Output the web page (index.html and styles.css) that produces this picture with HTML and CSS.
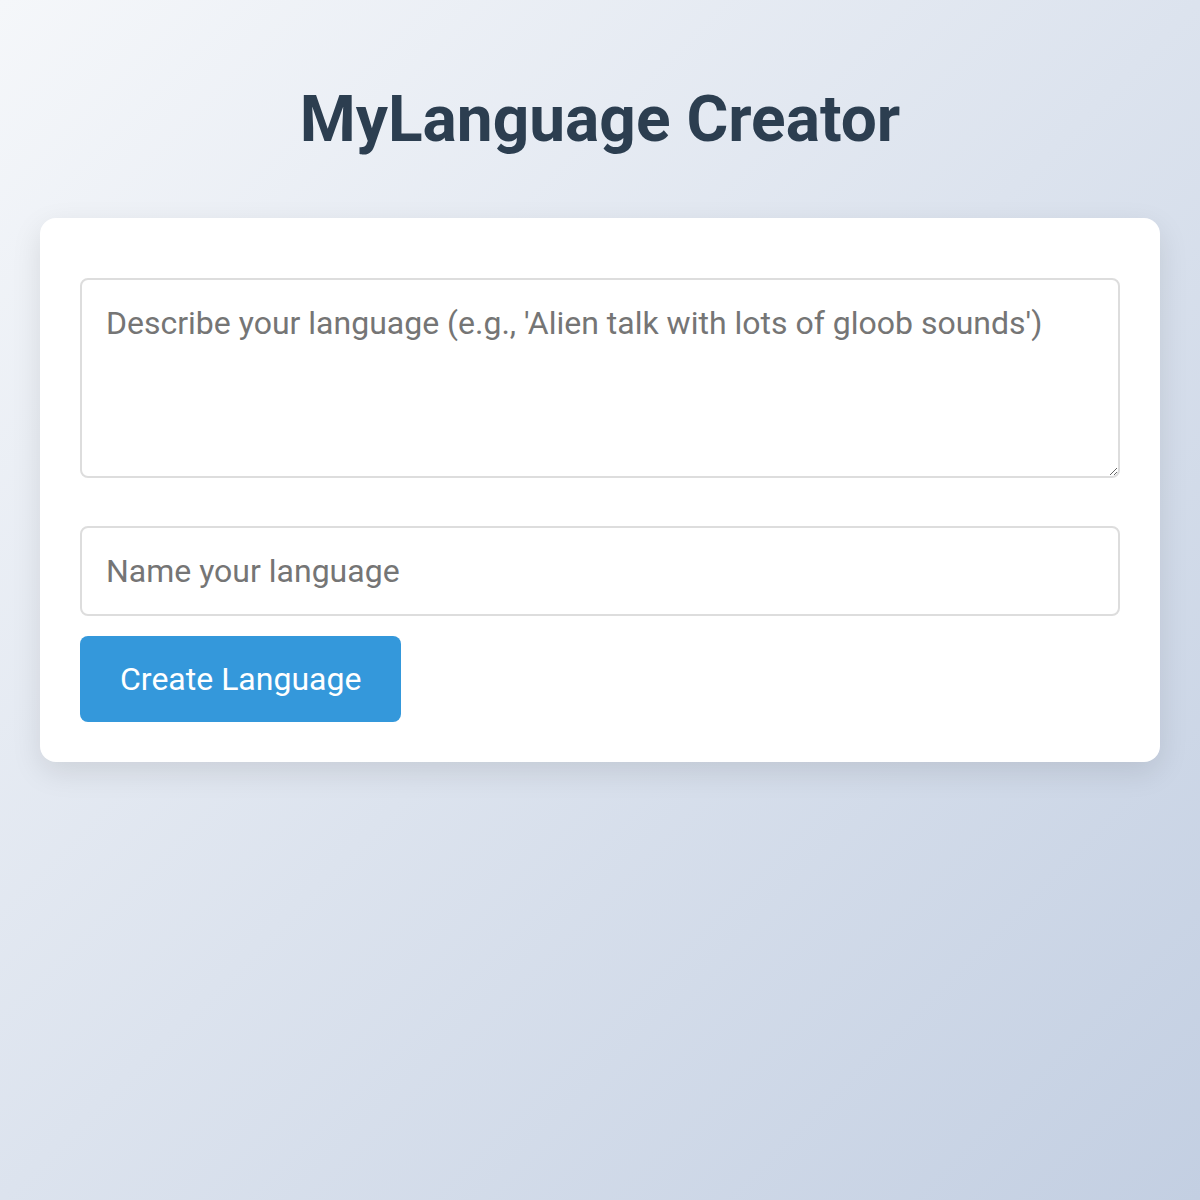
FILE: index.html
```html
<!DOCTYPE html>
<html lang="en">
<head>
<meta charset="utf-8">
<title>MyLanguage Creator</title>
<link rel="stylesheet" href="styles.css">
</head>
<body>
  <main class="app">
    <h1 class="app-title">MyLanguage Creator</h1>
    <section class="creator-card">
      <textarea class="field field-description" placeholder="Describe your language (e.g., 'Alien talk with lots of gloob sounds')"></textarea>
      <input class="field field-name" type="text" placeholder="Name your language">
      <button class="create-btn" type="button">Create Language</button>
    </section>
  </main>
</body>
</html>
```
FILE: styles.css
```css
* {
  box-sizing: border-box;
}

html, body {
  margin: 0;
  min-height: 100%;
}

body {
  font-family: Roboto, "Liberation Sans", Arial, sans-serif;
  background: linear-gradient(135deg, #f5f7fa 0%, #c3cfe2 100%);
  min-height: 100vh;
  padding: 40px;
  color: #2c3e50;
}

.app {
  max-width: 1120px;
  margin: 0 auto;
}

.app-title {
  text-align: center;
  font-size: 64px;
  font-weight: 700;
  color: #2c3e50;
  margin: 42px 0 60px;
  line-height: 76px;
}

.creator-card {
  background: #fff;
  border-radius: 16px;
  box-shadow: 0 10px 30px rgba(0, 0, 0, 0.1);
  padding: 60px 40px 40px;
  display: flex;
  flex-direction: column;
  align-items: flex-start;
}

.field {
  width: 100%;
  font-family: inherit;
  font-size: 32px;
  color: #333;
  border: 2px solid #ddd;
  border-radius: 8px;
  padding: 25px 24px;
  background: #fff;
  outline: none;
}

.field::placeholder {
  color: #757575;
}

.field-description {
  height: 200px;
  resize: vertical;
  padding: 24px 24px;
  line-height: 38px;
  margin-bottom: 48px;
}

.field-name {
  height: 90px;
  line-height: 38px;
  margin-bottom: 20px;
}

.create-btn {
  font-family: inherit;
  font-size: 32px;
  color: #fff;
  background: #3498db;
  border: none;
  border-radius: 8px;
  padding: 0 40px;
  height: 86px;
  cursor: pointer;
}
```
